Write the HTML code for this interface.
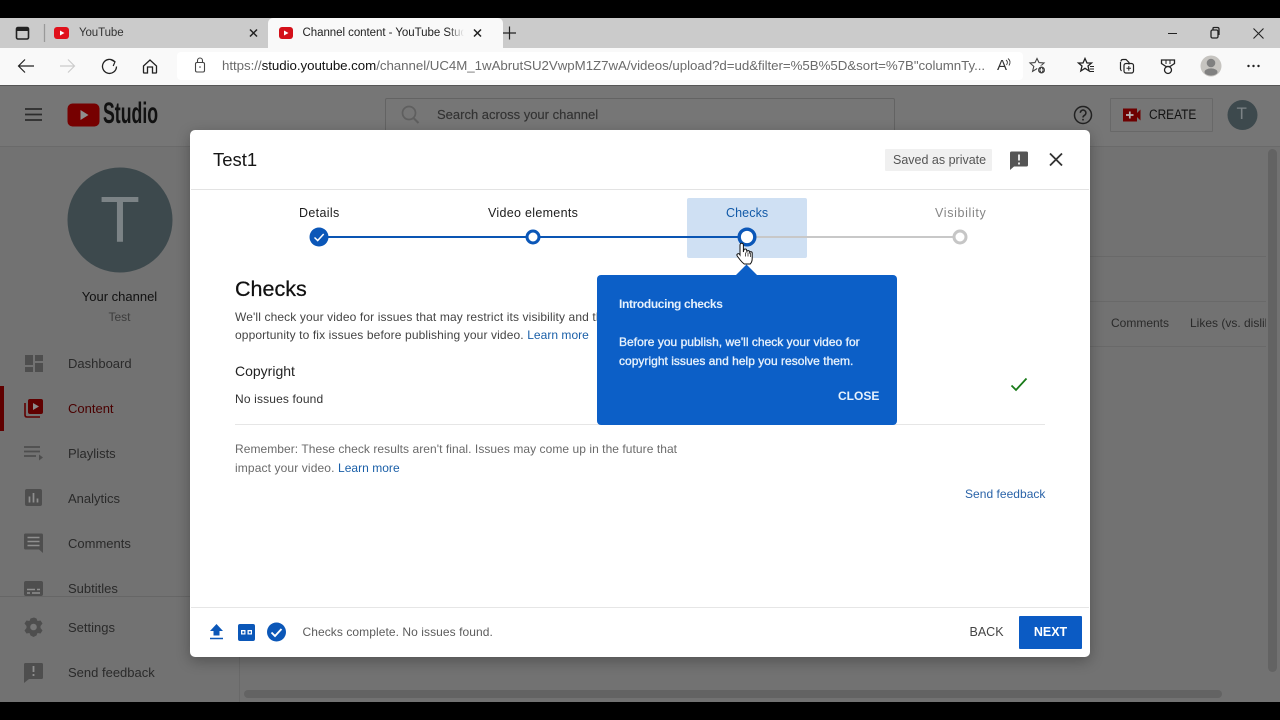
<!DOCTYPE html>
<html><head><meta charset="utf-8"><title>Channel content - YouTube Studio</title>
<style>
html,body{margin:0;padding:0;width:1280px;height:720px;overflow:hidden;background:#000}
body{position:relative;font-family:"Liberation Sans",sans-serif}
.t{position:absolute;white-space:nowrap;line-height:18px;height:18px}
.a{position:absolute}
svg{position:absolute;overflow:visible}
</style></head><body>
<!-- browser chrome -->
<div class="a" style="left:0;top:18px;width:1280px;height:30px;background:#cbcbcb"></div>
<div class="a" style="left:0;top:48px;width:1280px;height:37px;background:#f9f9f9"></div>
<div class="a" style="left:268px;top:18px;width:235px;height:30px;background:#f9f9f9;border-radius:5px 5px 0 0"></div>
<div class="a" style="left:177px;top:52px;width:846px;height:28px;background:#fff;border-radius:4px"></div>
<svg style="left:0;top:0" width="1280" height="85" fill="none" stroke="#222" stroke-width="1.3">
<rect x="16.500" y="27.500" width="12" height="11.500" rx="1.500" stroke-width="1.600"/><rect x="16.500" y="27.500" width="12" height="3.500" fill="#222" stroke="none"/>
<path d="M44.500 24V42" stroke="#999"/>
<rect x="54" y="27" width="15" height="12" rx="3" fill="#e0111b" stroke="none"/><path d="M60 30.500l4.500 2.500-4.500 2.500z" fill="#fff" stroke="none"/>
<rect x="279" y="27" width="14" height="12" rx="3" fill="#d4101a" stroke="none"/><path d="M284 30.500l4.500 2.500-4.500 2.500z" fill="#fff" stroke="none"/>
<path d="M250 29.500l7 7M257 29.500l-7 7M474 29.500l7 7M481 29.500l-7 7" stroke-width="1.500"/>
<path d="M509.500 26.500v13M503 33h13" stroke-width="1.200"/>
<path d="M1168 33.500h9" stroke-width="1"/>
<rect x="1211" y="30" width="7" height="8" rx="1.500"/><path d="M1213 30v-1.500q0-1 1-1h3.500q1.500 0 1.500 1.500v6"/>
<path d="M1253.500 28.500l10 10M1263.500 28.500l-10 10" stroke-width="1.100"/>
<path d="M34 66H19M25 59.500l-6.500 6.500 6.500 6.500" stroke-width="1.200"/>
<path d="M60 66h14M68 59.500l6.500 6.500-6.500 6.500" stroke="#ccc" stroke-width="1.200"/>
<path d="M114.500 61.500a7 7 0 1 0 2 5" stroke-width="1.300"/><path d="M110.500 59.500l4.500 2.300-1.800 4.200" stroke-width="1.200"/>
<path d="M143.500 66l6.500-6 6.500 6v6.500q0 .5-.5.5h-3.500v-6h-5v6H144q-.5 0-.5-.5z" stroke-width="1.300"/>
<rect x="195.500" y="62.500" width="9" height="9.500" rx="1.500" stroke="#444" stroke-width="1.100"/><path d="M197.500 62.500v-2a2.500 2.500 0 0 1 5 0v2" stroke="#444" stroke-width="1.100"/><circle cx="200" cy="67" r=".8" fill="#444" stroke="none"/>
<path d="M1085 58.500l2 4.500h4.500l-3.500 3 1.200 5-4.200-2.700-4.200 2.700 1.200-5-3.500-3h4.500z" stroke-width="1.300"/><path d="M1090 66.500h4M1090 69h4M1090 71.500h4" stroke-width="1"/>
<path d="M1037 58.500l2 4.100 5 .4-3.800 3.400 1.200 4.900-4.400-2.600-4.400 2.600 1.200-4.900-3.800-3.400 5-.4z" stroke="#444" stroke-width="1.100"/><circle cx="1041.500" cy="70" r="4.500" fill="#fff" stroke="none"/><circle cx="1041.500" cy="70" r="3.500" fill="#444" stroke="none"/><path d="M1039.500 70h4M1041.500 68v4" stroke="#fff" stroke-width=".9"/>
<path d="M1121 61.500q0-2 2-2h3l3 3v2" stroke-width="1.200"/><path d="M1120.500 62v7q0 1 1 2" stroke-width="1.200"/><rect x="1124" y="63.500" width="9.500" height="9.500" rx="2" stroke-width="1.200"/><path d="M1126.500 68.300h4.500M1128.800 66v4.600" stroke-width="1"/>
<path d="M1161.500 60h13v3.500l-4.500 3h-4l-4.500-3z" stroke-width="1.300"/><circle cx="1168" cy="70" r="3.500" stroke-width="1.300"/><path d="M1166 60v4M1170 60v4" stroke-width="1"/>
<circle cx="1211" cy="66" r="10.500" fill="#c6c4c0" stroke="none"/><circle cx="1211" cy="63" r="4.300" fill="#808080" stroke="none"/><ellipse cx="1211" cy="72" rx="6.500" ry="3.600" fill="#808080" stroke="none"/>
<circle cx="1248.500" cy="66" r="1.200" fill="#222" stroke="none"/><circle cx="1253.500" cy="66" r="1.200" fill="#222" stroke="none"/><circle cx="1258.500" cy="66" r="1.200" fill="#222" stroke="none"/>
</svg>
<div class="t" style="left:79px;top:24px;font-size:11.500px;color:#333;letter-spacing:-.1px">YouTube</div>
<div class="t" style="left:302.500px;top:24px;width:161px;overflow:hidden;font-size:11.500px;color:#222;letter-spacing:-.05px;-webkit-mask-image:linear-gradient(90deg,#000 145px,transparent 161px)">Channel content - YouTube Studio</div>
<div class="t" style="left:222px;top:57px;width:768px;overflow:hidden;font-size:13.300px;color:#6b6b6b;letter-spacing:-.04px">https://<span style="color:#111">studio.youtube.com</span>/channel/UC4M_1wAbrutSU2VwpM1Z7wA/videos/upload?d=ud&amp;filter=%5B%5D&amp;sort=%7B"columnTy...</div>
<div class="t" style="left:997px;top:57px;font-size:15px;color:#333">A</div>
<svg style="left:0;top:0" width="1280" height="85" fill="none" stroke="#333" stroke-width=".9"><path d="M1006 60q2.500 2 .5 5M1008 58.500q3.500 3 1 7"/></svg>

<!-- dimmed page -->
<div class="a" style="left:0;top:85px;width:1280px;height:617px;background:#727272"></div>
<div class="a" style="left:0;top:85px;width:1280px;height:60px;background:#767676;border-bottom:1px solid #6a6a6a;border-top:1px solid #555"></div>
<div class="a" style="left:239px;top:146px;width:1px;height:556px;background:#696969"></div>
<div class="a" style="left:385px;top:98px;width:510px;height:50px;box-sizing:border-box;border:1px solid #636363;border-radius:2px"></div>
<svg style="left:0;top:0" width="1280" height="720" fill="none">
<path d="M25 109h17M25 114.500h17M25 120h17" stroke="#2c2c2c" stroke-width="1.800"/>
<rect x="67.500" y="103.500" width="32" height="23" rx="5" fill="#760000"/><path d="M80.500 110l8 5-8 5z" fill="#8f8f8f"/>
<circle cx="409" cy="113" r="6.500" stroke="#5f5f5f" stroke-width="1.700"/><path d="M413.500 118l5 5" stroke="#5f5f5f" stroke-width="2"/>
<circle cx="1083" cy="115" r="8.500" stroke="#222" stroke-width="1.500"/><path d="M1080.300 112.800a2.800 2.800 0 1 1 4.200 2.500c-1 .6-1.500 1-1.500 2.200" stroke="#222" stroke-width="1.500"/><circle cx="1083" cy="119.700" r=".9" fill="#222"/>
<rect x="1123" y="108.500" width="14" height="13" fill="#6e0000"/><path d="M1137 113l3.500-3.500v11l-3.500-3.500z" fill="#6e0000"/><path d="M1126 115h7.500M1129.800 111.500v7" stroke="#b7b7b7" stroke-width="1.700"/>
<circle cx="1242.500" cy="115" r="15" fill="#3d494d"/>
<circle cx="120" cy="220" r="52.500" fill="#3d494d"/>
<rect x="25" y="355" width="8" height="10" fill="#4e4e4e"/><rect x="35" y="355" width="8" height="6" fill="#4e4e4e"/><rect x="25" y="367" width="8" height="5" fill="#4e4e4e"/><rect x="35" y="363" width="8" height="9" fill="#4e4e4e"/>
<rect x="28" y="399" width="15" height="15" rx="2" fill="#600000"/><path d="M33 403l6 3.500-6 3.500z" fill="#8c8c8c"/><path d="M25 403v12q0 2 2 2h13" stroke="#600000" stroke-width="1.600"/>
<path d="M24 447h16M24 451.500h16M24 456h12" stroke="#4e4e4e" stroke-width="1.700"/><path d="M39 454.500l4 3-4 3z" fill="#4e4e4e"/>
<rect x="25" y="489" width="17" height="17" rx="2" fill="#4e4e4e"/><path d="M29.500 496.500v6M33.500 493v9.500M37.500 498.500v4" stroke="#8f8f8f" stroke-width="1.700"/>
<path d="M24 535q0-1.500 1.500-1.500h16q1.500 0 1.500 1.500v18l-4-3.500H25.500Q24 549.500 24 548z" fill="#4e4e4e"/><path d="M27.500 537.500h12M27.500 541.500h12M27.500 545.500h12" stroke="#8f8f8f" stroke-width="1.400"/>
<rect x="24" y="581" width="19" height="15" rx="2" fill="#4e4e4e"/><path d="M27 589.500h8M37 589.500h3M27 593h3M32 593h8" stroke="#8f8f8f" stroke-width="1.500"/>
<path d="M34 617.500l2.500 1 1 2.500 3-.5 2 3-2 2.500v2l2 2.500-2 3-3-.5-1 2.500-3 1.500-3-1.500-1-2.500-3 .5-2-3 2-2.500v-2l-2-2.500 2-3 3 .5 1-2.500z" fill="#4e4e4e"/><circle cx="33.500" cy="627" r="3.300" fill="#777"/>
<path d="M24 664.500q0-1.500 1.500-1.500h16q1.500 0 1.500 1.500v13q0 1.500-1.500 1.500H29l-5 4z" fill="#4e4e4e"/><path d="M33.500 666v6M33.500 674v2" stroke="#8f8f8f" stroke-width="1.800"/>
</svg>
<div class="a" style="left:0;top:386px;width:4px;height:45px;background:#600000"></div>
<div class="a" style="left:0;top:596px;width:240px;height:1px;background:#666"></div>
<div class="a" style="left:1268px;top:149px;width:9px;height:523px;background:#636363;border-radius:5px"></div>
<div class="a" style="left:244px;top:690px;width:978px;height:8px;background:#636363;border-radius:4px"></div>
<div class="a" style="left:240px;top:256px;width:1026px;height:1px;background:#696969"></div>
<div class="a" style="left:240px;top:301px;width:1026px;height:1px;background:#696969"></div>
<div class="a" style="left:240px;top:346px;width:1026px;height:1px;background:#696969"></div>
<div class="t" style="left:103px;top:100px;font-size:30px;line-height:28px;height:28px;font-weight:bold;color:#111;transform:scaleX(.59);transform-origin:0 50%">Studio</div>
<div class="t" style="left:437px;top:106px;font-size:13px;color:#333;-webkit-text-stroke:.15px #333">Search across your channel</div>
<div class="a" style="left:1110px;top:98px;width:101px;height:32px;border:1px solid #686868;border-radius:1px"></div>
<div class="t" style="left:1149px;top:105.500px;font-size:13.500px;color:#111;transform:scaleX(.88);transform-origin:0 50%">CREATE</div>
<div class="t" style="left:1236.500px;top:105px;font-size:17px;color:#7c8386">T</div>
<div class="t" style="left:100px;top:190px;font-size:65px;line-height:60px;height:60px;color:#7c8386;width:40px;text-align:center">T</div>
<div class="t" style="left:0;top:288px;width:239px;text-align:center;font-size:13px;color:#111">Your channel</div>
<div class="t" style="left:0;top:308px;width:239px;text-align:center;font-size:12px;color:#3d3d3d">Test</div>
<div class="t" style="left:68px;top:355px;font-size:13px;color:#2a2a2a">Dashboard</div>
<div class="t" style="left:68px;top:400px;font-size:13px;color:#4a0000">Content</div>
<div class="t" style="left:68px;top:445px;font-size:13px;color:#2a2a2a">Playlists</div>
<div class="t" style="left:68px;top:490px;font-size:13px;color:#2a2a2a">Analytics</div>
<div class="t" style="left:68px;top:535px;font-size:13px;color:#2a2a2a">Comments</div>
<div class="t" style="left:68px;top:580px;font-size:13px;color:#2a2a2a">Subtitles</div>
<div class="t" style="left:68px;top:619px;font-size:13px;color:#2a2a2a">Settings</div>
<div class="t" style="left:68px;top:664px;font-size:13px;color:#2a2a2a">Send feedback</div>
<div class="t" style="left:1111px;top:314px;font-size:12px;color:#2a2a2a">Comments</div>
<div class="t" style="left:1190px;top:314px;width:76px;overflow:hidden;font-size:12px;color:#2a2a2a">Likes (vs. dislikes)</div>

<!-- dialog -->
<div class="a" style="left:190px;top:130px;width:900px;height:527px;background:#fff;border-radius:5px;box-shadow:0 4px 14px rgba(0,0,0,.28)"></div>
<div class="a" style="left:191px;top:189px;width:898px;height:1px;background:#e3e3e3"></div>
<div class="a" style="left:191px;top:607px;width:898px;height:1px;background:#e6e6e6"></div>
<div class="a" style="left:235px;top:424px;width:810px;height:1px;background:#e6e6e6"></div>
<div class="t" style="left:213px;top:149px;font-size:18.500px;line-height:22px;height:22px;color:#161616">Test1</div>
<div class="a" style="left:885px;top:149px;width:107px;height:22px;background:#f0f0f0;border-radius:1px"></div>
<div class="t" style="left:893px;top:151px;font-size:12.500px;color:#555">Saved as private</div>
<div class="a" style="left:687px;top:198px;width:120px;height:60px;background:#cfe0f3;border-radius:2px"></div>
<div class="a" style="left:319px;top:236px;width:428px;height:2px;background:#0a55b3"></div>
<div class="a" style="left:747px;top:236px;width:213px;height:2px;background:#c8c8c8"></div>
<svg style="left:0;top:0" width="1280" height="720" fill="none">
<path d="M1010 153q0-1.500 1.500-1.500h15q1.500 0 1.500 1.500v12q0 1.500-1.500 1.500H1014l-4 3.500z" fill="#555"/><path d="M1019 154.500v6M1019 162.500v2" stroke="#f2f2f2" stroke-width="1.800"/>
<path d="M1050 153.500l12 12M1062 153.500l-12 12" stroke="#333" stroke-width="1.800"/>
<circle cx="319" cy="237" r="9.500" fill="#0b57b8"/><path d="M314.500 237.500l3.200 3 6-6.500" stroke="#fff" stroke-width="1.500"/>
<circle cx="533" cy="237" r="6" fill="#fff" stroke="#0b57b8" stroke-width="3"/>
<circle cx="747" cy="237" r="7.800" fill="#fff" stroke="#0b57b8" stroke-width="3.400"/>
<circle cx="960" cy="237" r="6" fill="#fff" stroke="#c6c6c6" stroke-width="3"/>
<path d="M1011.500 385.500l4.500 4.500 10.500-11.500" stroke="#187a18" stroke-width="1.800"/>
<path d="M216.500 624l6.500 7h-3.500v4.500h-6V631H210z" fill="#0b57b8"/><path d="M210 638.500h13" stroke="#0b57b8" stroke-width="1.500"/>
<rect x="238" y="624" width="17" height="17" rx="2" fill="#0b57b8"/><rect x="241" y="630" width="4.500" height="4.500" fill="#fff"/><rect x="247.500" y="630" width="4.500" height="4.500" fill="#fff"/><rect x="242.300" y="631.300" width="2" height="2" fill="#0b57b8"/><rect x="248.800" y="631.300" width="2" height="2" fill="#0b57b8"/>
<circle cx="276.500" cy="632" r="9.500" fill="#0b57b8"/><path d="M271.500 632.500l3.500 3.500 6.500-7" stroke="#fff" stroke-width="1.900"/>
</svg>
<div class="t" style="left:299px;top:204px;font-size:12.500px;color:#1d1d1d;letter-spacing:.35px">Details</div>
<div class="t" style="left:488px;top:204px;font-size:12.500px;color:#1d1d1d;letter-spacing:.3px">Video elements</div>
<div class="t" style="left:726px;top:204px;font-size:12.500px;color:#125aa8;letter-spacing:.1px">Checks</div>
<div class="t" style="left:935px;top:204px;font-size:12.500px;color:#858585;letter-spacing:.65px">Visibility</div>
<div class="t" style="left:235px;top:277px;font-size:21.500px;line-height:24px;height:24px;color:#111;-webkit-text-stroke:.25px #111">Checks</div>
<div class="t" style="left:235px;top:307.500px;width:362px;overflow:hidden;font-size:12px;color:#444;letter-spacing:.12px">We'll check your video for issues that may restrict its visibility and then you'll have the</div>
<div class="t" style="left:235px;top:326px;font-size:12px;color:#444;letter-spacing:.12px">opportunity to fix issues before publishing your video. <span style="color:#1a5fa8;letter-spacing:.03px">Learn more</span></div>
<div class="t" style="left:235px;top:362px;font-size:14px;color:#222">Copyright</div>
<div class="t" style="left:235px;top:390px;font-size:12px;color:#333;letter-spacing:.15px">No issues found</div>
<div class="t" style="left:235px;top:440px;font-size:12px;color:#6a6a6a;letter-spacing:.055px">Remember: These check results aren't final. Issues may come up in the future that</div>
<div class="t" style="left:235px;top:459px;font-size:12px;color:#6a6a6a;letter-spacing:.12px">impact your video. <span style="color:#1a5fa8;letter-spacing:.03px">Learn more</span></div>
<div class="t" style="left:965px;top:485px;font-size:12px;color:#2a63a8;letter-spacing:.03px">Send feedback</div>
<div class="t" style="left:302.500px;top:623px;font-size:12px;color:#5c5c5c;letter-spacing:.07px">Checks complete. No issues found.</div>
<div class="t" style="left:969.500px;top:623px;font-size:12.500px;color:#444">BACK</div>
<div class="a" style="left:1019px;top:616px;width:63px;height:33px;background:#0b5bc4;border-radius:1px"></div>
<div class="t" style="left:1019px;top:623px;width:63px;text-align:center;font-size:12.500px;font-weight:bold;color:#fff">NEXT</div>

<!-- tooltip -->
<div class="a" style="left:597px;top:275px;width:300px;height:150px;background:#0c5fc7;border-radius:4px"></div>
<svg style="left:0;top:0" width="1280" height="720"><path d="M736 275l10.500-10.500L757 275z" fill="#0c5fc7"/>
<path d="M740 255v-10a1.700 1.700 0 0 1 3.400 0v7l.3-1.500a1.500 1.500 0 0 1 3 0l.2 1a1.400 1.400 0 0 1 2.700.3l.1.700a1.300 1.300 0 0 1 2.500.5v5.500q0 3.500-2 5.500h-6q-2-1.500-4-4l-3-4q-.8-1.500 .5-2.200 1.200-.5 2 .7z" fill="#fff" stroke="#111" stroke-width="1"/>
<path d="M745.500 252.500v4M748 252.500v4M750.500 253v4" stroke="#111" stroke-width=".7"/></svg>
<div class="t" style="left:619px;top:295px;font-size:12px;font-weight:bold;color:#e6f1fc;letter-spacing:-.36px">Introducing checks</div>
<div class="t" style="left:619px;top:332.500px;font-size:12px;color:#e6f1fc;-webkit-text-stroke:.35px #e6f1fc;letter-spacing:.02px">Before you publish, we'll check your video for</div>
<div class="t" style="left:619px;top:351.500px;font-size:12px;color:#e6f1fc;-webkit-text-stroke:.35px #e6f1fc;letter-spacing:.02px">copyright issues and help you resolve them.</div>
<div class="t" style="left:838px;top:387px;font-size:12px;font-weight:bold;color:#e6f1fc">CLOSE</div>
</body></html>
